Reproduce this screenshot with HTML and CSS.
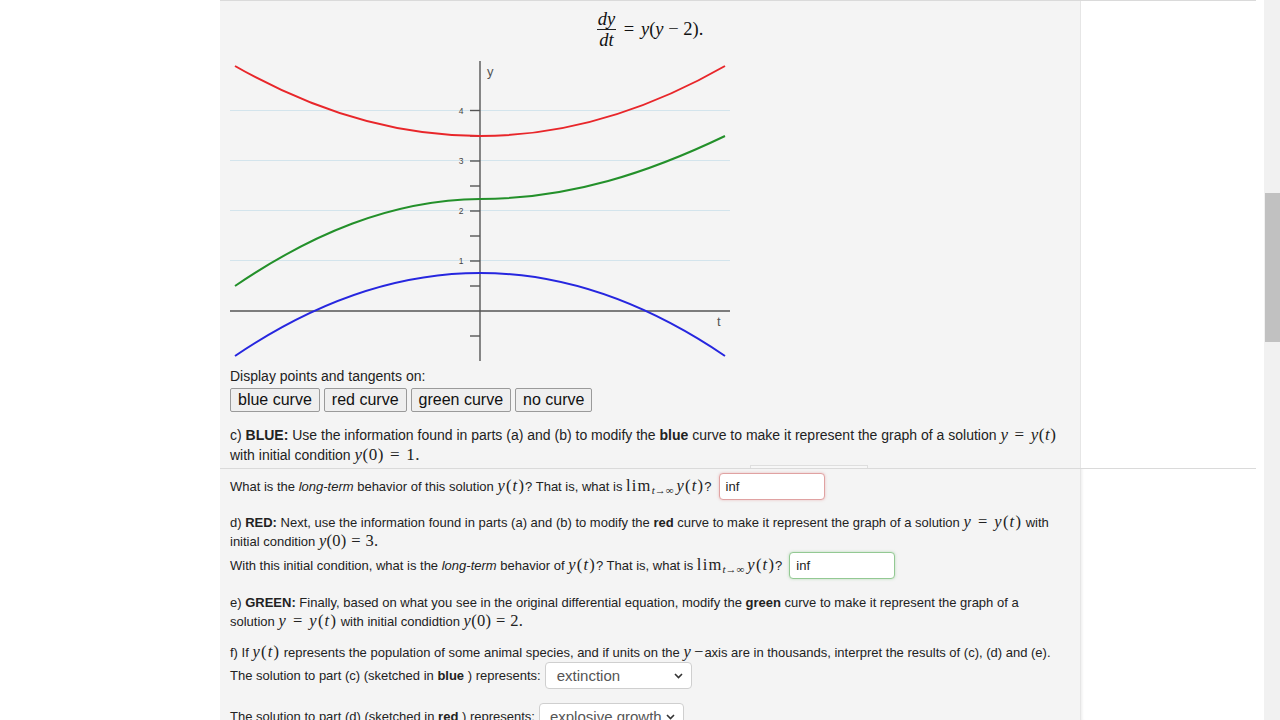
FILE: index.html
```html
<!DOCTYPE html>
<html>
<head>
<meta charset="utf-8">
<link rel="stylesheet" href="styles.css">
</head>
<body>
<div class="page">
  <div class="section top">
    <div class="left">
      <div class="eq">
        <span class="frac"><span class="num m"><i>dy</i></span><span class="den m"><i>dt</i></span></span>
        <span class="m eqrest"><span class="mo">=</span><i>y</i>(<i>y</i><span class="mb">−</span>2).</span>
      </div>
      <svg class="graph" width="505" height="306" viewBox="230 58 505 306">
        <g stroke="#d3e4ec" stroke-width="1.2">
          <line x1="230" y1="110.5" x2="730" y2="110.5"/>
          <line x1="230" y1="160.5" x2="730" y2="160.5"/>
          <line x1="230" y1="210.5" x2="730" y2="210.5"/>
          <line x1="230" y1="260.5" x2="730" y2="260.5"/>
        </g>
        <g stroke="#555" stroke-width="1.4">
          <line x1="230" y1="311" x2="730" y2="311"/>
          <line x1="480" y1="61" x2="480" y2="361"/>
          <line x1="470" y1="110.5" x2="480" y2="110.5"/>
          <line x1="470" y1="136" x2="480" y2="136"/>
          <line x1="470" y1="161" x2="480" y2="161"/>
          <line x1="470" y1="186" x2="480" y2="186"/>
          <line x1="470" y1="211" x2="480" y2="211"/>
          <line x1="470" y1="236" x2="480" y2="236"/>
          <line x1="470" y1="261" x2="480" y2="261"/>
          <line x1="470" y1="286" x2="480" y2="286"/>
          <line x1="470" y1="336" x2="480" y2="336"/>
        </g>
        <g class="ticklbl" fill="#444" font-size="8.5" text-anchor="middle">
          <text x="461" y="113.5">4</text>
          <text x="461" y="164">3</text>
          <text x="461" y="214">2</text>
          <text x="461" y="264">1</text>
        </g>
        <text class="axlbl" x="487" y="76" font-size="13" fill="#555">y</text>
        <text class="axlbl" x="717" y="326" font-size="13" fill="#555">t</text>
        <g fill="none" stroke-width="2">
          <path stroke="#e8262a" d="M235,66 Q357.5,136 480,136 Q602.5,136 725,66"/>
          <path stroke="#23902a" d="M235,286 C310,235 390,200 480,199 C570,199 650,172 725,136"/>
          <path stroke="#2626df" d="M235,356 Q357.5,273 480,273 Q602.5,273 725,356"/>
        </g>
      </svg>
      <div class="label">Display points and tangents on:</div>
      <div class="buttons">
        <button class="btn">blue curve</button>
        <button class="btn">red curve</button>
        <button class="btn">green curve</button>
        <button class="btn">no curve</button>
      </div>
      <p class="para big">c) <b>BLUE:</b> Use the information found in parts (a) and (b) to modify the <b>blue</b> curve to make it represent the graph of a solution <span class="m"><i>y</i><span class="mo">=</span><i>y</i>(<i>t</i>)</span><br>with initial condition <span class="m"><i>y</i>(0)<span class="mo">=</span>1.</span></p>
      <div class="ghost"></div>
    </div>
    <div class="right"></div>
  </div>
  <div class="section bottom">
    <div class="left">
      <div class="row">
        <span>What is the <i>long-term</i> behavior of this solution <span class="m sm"><i>y</i>(<i>t</i>)</span>? That is, what is <span class="m sm lim">lim<sub><i>t</i>→∞</sub></span><span class="m sm"><i>y</i>(<i>t</i>)</span>?</span>
        <span class="input bad">inf</span>
      </div>
      <p class="para d">d) <b>RED:</b> Next, use the information found in parts (a) and (b) to modify the <b>red</b> curve to make it represent the graph of a solution <span class="m sm"><i>y</i><span class="mo">=</span><i>y</i>(<i>t</i>)</span> with<br>initial condition <span class="m sm nn"><i>y</i>(0)<span class="mo">=</span>3.</span></p>
      <div class="row r2">
        <span>With this initial condition, what is the <i>long-term</i> behavior of <span class="m sm"><i>y</i>(<i>t</i>)</span>? That is, what is <span class="m sm lim">lim<sub><i>t</i>→∞</sub></span><span class="m sm"><i>y</i>(<i>t</i>)</span>?</span>
        <span class="input good">inf</span>
      </div>
      <p class="para e">e) <b>GREEN:</b> Finally, based on what you see in the original differential equation, modify the <b>green</b> curve to make it represent the graph of a<br>solution <span class="m sm"><i>y</i><span class="mo">=</span><i>y</i>(<i>t</i>)</span> with initial condidtion <span class="m sm nn"><i>y</i>(0)<span class="mo">=</span>2.</span></p>
      <p class="para f">f) If <span class="m sm"><i>y</i>(<i>t</i>)</span> represents the population of some animal species, and if units on the <span class="m sm"><i>y</i><span class="mt">−</span></span>axis are in thousands, interpret the results of (c), (d) and (e).</p>
      <div class="row sel1">
        <span>The solution to part (c) (sketched in <b>blue</b> ) represents:</span>
        <span class="select w1">extinction<svg class="chev" width="9" height="6" viewBox="0 0 9 6"><path d="M1 1 L4.5 4.5 L8 1" fill="none" stroke="#333" stroke-width="1.6"/></svg></span>
      </div>
      <div class="row sel2">
        <span>The solution to part (d) (sketched in <b>red</b> ) represents:</span>
        <span class="select w2">explosive growth<svg class="chev" width="9" height="6" viewBox="0 0 9 6"><path d="M1 1 L4.5 4.5 L8 1" fill="none" stroke="#333" stroke-width="1.6"/></svg></span>
      </div>
    </div>
    <div class="right r-low"></div>
  </div>
</div>
<div class="scrollbar"><div class="thumb"></div></div>
</body>
</html>
```
FILE: styles.css
```css
html, body {
  margin: 0;
  padding: 0;
}
body {
  width: 1280px;
  height: 720px;
  overflow: hidden;
  background: #ffffff;
  display: flex;
  font-family: "Liberation Sans", Arial, sans-serif;
  color: #222;
}
.page {
  margin-left: 220px;
  width: 1036px;
  display: flex;
  flex-direction: column;
}
.section {
  display: flex;
  box-sizing: border-box;
  border-top: 1px solid #dadada;
  overflow: hidden;
}
.top {
  height: 468px;
}
.bottom {
  height: 252px;
}
.left {
  width: 860px;
  box-sizing: border-box;
  padding: 0 10px;
  background: #f4f4f4;
  overflow: hidden;
}
.right {
  flex: 1;
  background: #ffffff;
  border-left: 1px solid #e6e6e6;
}
.r-low {
  box-shadow: inset 3px 0 3px -2px #ececec;
}
.m {
  font-family: "Liberation Serif", "DejaVu Serif", serif;
  font-size: 17px;
  letter-spacing: 0.5px;
  line-height: 1;
}
.m.sm {
  font-size: 16.5px;
  letter-spacing: 1.2px;
}
.m.sm.nn {
  letter-spacing: 0.3px;
}
.mo {
  margin: 0 0.36em;
}
.sm.nn .mo {
  margin: 0 0.28em;
}
.mb {
  margin: 0 0.25em;
}
.mt {
  margin: 0 0 0 0.12em;
}
.eq {
  height: 57px;
  display: flex;
  justify-content: center;
  align-items: center;
  color: #111;
}
.eq .m {
  font-size: 18.5px;
  letter-spacing: 0;
}
.frac {
  display: inline-flex;
  flex-direction: column;
  align-items: center;
  margin-right: 1px;
}
.num {
  line-height: 18px;
  padding: 0 1px 1px;
  border-bottom: 1px solid #222;
}
.den {
  line-height: 18px;
  padding: 1px 1px 0;
}
.eqrest {
  margin-top: -1px;
}
.graph {
  display: block;
}
.ticklbl, .axlbl {
  font-family: "Liberation Sans", Arial, sans-serif;
}
.label {
  margin-top: 4px;
  font-size: 14px;
  line-height: 16px;
}
.buttons {
  margin-top: 4px;
  display: flex;
  gap: 4px;
}
.btn {
  height: 24px;
  padding: 0 7px;
  margin: 0;
  font-family: "Liberation Sans", Arial, sans-serif;
  font-size: 16px;
  color: #111;
  background: #efefef;
  border: 1px solid #9a9a9a;
  border-radius: 2px;
}
.para {
  margin: 0;
  font-size: 13px;
  line-height: 19px;
}
.para.big {
  margin-top: 13px;
  font-size: 14px;
  line-height: 20px;
}
.ghost {
  margin: 0 0 0 520px;
  width: 116px;
  height: 12px;
  border: 1px solid #dedede;
  background: #f7f7f7;
}
.bottom .left {
  padding-top: 4px;
}
.row {
  display: flex;
  align-items: center;
  gap: 7px;
  height: 27px;
  font-size: 13px;
}
.row.r2 {
  margin-top: 1px;
}
.para.d {
  margin-top: 13px;
}
.para.e {
  margin-top: 14px;
}
.para.f {
  margin-top: 12px;
}
.row.sel1 {
  gap: 4px;
}
.row.sel2 {
  gap: 4px;
  margin-top: 14px;
}
.lim {
  margin-right: 3px;
  letter-spacing: 0.6px;
}
.lim sub {
  font-size: 11px;
  letter-spacing: 0;
  vertical-align: -3px;
  line-height: 0;
}
.input {
  box-sizing: border-box;
  width: 106px;
  height: 27px;
  padding: 0 6px;
  display: flex;
  align-items: center;
  background: #ffffff;
  border-radius: 4px;
  font-size: 13px;
  color: #222;
}
.input.bad {
  border: 1px solid #e0a2a2;
  box-shadow: 0 0 3px rgba(215, 90, 90, 0.35);
}
.input.good {
  border: 1px solid #93c993;
  box-shadow: 0 0 3px rgba(80, 170, 80, 0.35);
}
.select {
  box-sizing: border-box;
  height: 27px;
  display: flex;
  align-items: center;
  justify-content: space-between;
  padding: 0 8px 0 11px;
  background: #ffffff;
  border: 1px solid #cfcfcf;
  border-radius: 4px;
  font-size: 15px;
  color: #555;
}
.select.w1 {
  width: 147px;
}
.select.w2 {
  width: 145px;
  padding-left: 10px;
}
.chev {
  display: block;
}
.scrollbar {
  margin-left: 8px;
  width: 16px;
  height: 720px;
  background: #f1f1f1;
}
.thumb {
  margin: 193px 0 0 1px;
  width: 15px;
  height: 149px;
  background: #c1c1c1;
}
```
